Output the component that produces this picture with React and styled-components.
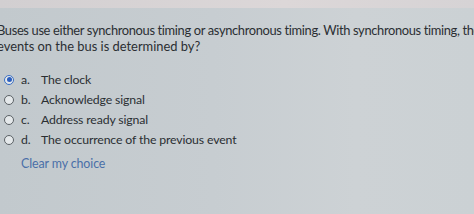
import styled, { createGlobalStyle } from "styled-components";

const Global = createGlobalStyle`
  html, body {
    margin: 0;
    padding: 0;
    width: 474px;
    height: 214px;
    overflow: hidden;
  }
  body {
    font-family: Lato, "Noto Sans", sans-serif;
    background: #c8ced2;
  }
`;

const Screen = styled.div`
  width: 474px;
  height: 214px;
  overflow: hidden;
  display: flex;
  flex-direction: column;
  background: linear-gradient(90deg, #c2c9cd 0%, #c7cdd1 45%, #cdd2d5 75%, #cbd1d4 100%);
`;

const TopStrip = styled.div`
  height: 8px;
  flex-shrink: 0;
  background: linear-gradient(90deg, #d2cfd1, #dcd7d8 60%, #d6d3d5);
`;

const Question = styled.div`
  margin: 14px 0 0 -3px;
  font-size: 12.9px;
  line-height: 16px;
  color: #2b2f33;

  span {
    display: block;
    white-space: nowrap;
  }
  span:first-child {
    letter-spacing: -0.35px;
  }
`;

const Options = styled.div`
  display: flex;
  flex-direction: column;
  gap: 3px;
  margin: 17px 0 0 4px;
`;

const Option = styled.label`
  display: flex;
  align-items: center;
  height: 17px;
  font-size: 12.3px;
  letter-spacing: -0.15px;
  color: #2b2f33;
`;

const Radio = styled.span`
  width: 10px;
  height: 10px;
  box-sizing: border-box;
  border-radius: 50%;
  border: 1.3px solid ${(p) => (p.$checked ? "#3a6fc4" : "#5c6266")};
  background: #e4e8ea;
  display: flex;
  align-items: center;
  justify-content: center;
  flex-shrink: 0;

  &::after {
    content: "";
    width: 5px;
    height: 5px;
    border-radius: 50%;
    background: #2c5fbf;
    display: ${(p) => (p.$checked ? "block" : "none")};
  }
`;

const Letter = styled.span`
  width: 20px;
  margin-left: 7px;
  flex-shrink: 0;
`;

const Text = styled.span`
  white-space: nowrap;
`;

const Clear = styled.a`
  margin: 8px 0 0 21px;
  font-size: 12.4px;
  letter-spacing: -0.1px;
  color: #4a6fa8;
  text-decoration: none;
`;

const options = [
  { letter: "a.", text: "The clock", checked: true },
  { letter: "b.", text: "Acknowledge signal" },
  { letter: "c.", text: "Address ready signal" },
  { letter: "d.", text: "The occurrence of the previous event" },
];

export default function App() {
  return (
    <Screen>
      <Global />
      <TopStrip />
      <Question>
        <span>
          Buses use either synchronous timing or asynchronous timing. With synchronous timing, the occurrence of
        </span>
        <span>events on the bus is determined by?</span>
      </Question>
      <Options>
        {options.map((o) => (
          <Option key={o.letter}>
            <Radio $checked={o.checked} />
            <Letter>{o.letter}</Letter>
            <Text>{o.text}</Text>
          </Option>
        ))}
      </Options>
      <Clear href="#">Clear my choice</Clear>
    </Screen>
  );
}
